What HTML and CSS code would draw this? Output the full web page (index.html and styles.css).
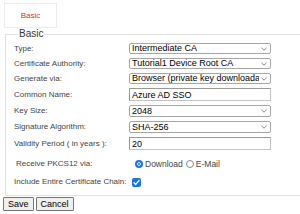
FILE: index.html
```html
<!DOCTYPE html>
<html>
<head>
<meta charset="utf-8">
<link rel="stylesheet" href="styles.css">
</head>
<body>
<div class="page">
  <div class="tab"><span>Basic</span></div>
  <fieldset class="box">
    <legend>Basic</legend>
    <div class="form">
      <label class="lbl">Type:</label>
      <select class="ctl h11"><option>Intermediate CA</option></select>

      <label class="lbl">Certificate Authority:</label>
      <select class="ctl h11"><option>Tutorial1 Device Root CA</option></select>

      <label class="lbl">Generate via:</label>
      <select class="ctl h11"><option>Browser (private key downloadable)</option></select>

      <label class="lbl">Common Name:</label>
      <input class="ctl txt h13" type="text" value="Azure AD SSO">

      <label class="lbl">Key Size:</label>
      <select class="ctl h12"><option>2048</option></select>

      <label class="lbl">Signature Algorithm:</label>
      <select class="ctl h12"><option>SHA-256</option></select>

      <label class="lbl">Validity Period ( in years ):</label>
      <input class="ctl txt h13" type="text" value="20">

      <label class="lbl indent radio-lbl">Receive PKCS12 via:</label>
      <div class="radios">
        <span class="radio on"></span><span class="rtext">Download</span>
        <span class="radio"></span><span class="rtext">E-Mail</span>
      </div>

      <label class="lbl check-lbl">Include Entire Certificate Chain:</label>
      <div class="checkwrap">
        <span class="check">
          <svg width="9" height="9" viewBox="0 0 9 9"><path d="M2 4.7 L3.7 6.4 L7 2.6" fill="none" stroke="#fff" stroke-width="1.4" stroke-linecap="round" stroke-linejoin="round"/></svg>
        </span>
      </div>
    </div>
  </fieldset>
  <div class="buttons">
    <button class="btn">Save</button>
    <button class="btn">Cancel</button>
  </div>
</div>
</body>
</html>
```
FILE: styles.css
```css
html, body {
  margin: 0;
  padding: 0;
  overflow: hidden;
  background: #fff;
}
body {
  font-family: "Liberation Sans", Arial, sans-serif;
  width: 300px;
  height: 214px;
}
.page {
  padding: 3px 0 0 3px;
}
.tab {
  margin-left: 1px;
  width: 51px;
  height: 23px;
  border: 1px solid #ececec;
  display: flex;
  align-items: center;
  justify-content: center;
}
.tab span {
  color: #d0333b;
  font-size: 8px;
}
.box {
  box-sizing: border-box;
  margin: 0 0 0 2px;
  padding: 0 0 7px 8px;
  width: 295px;
  border: 1px solid #e2e2e2;
  border-width: 1px 0 1px 1px;
}
.box legend {
  font-size: 10px;
  color: #333;
  padding: 0 1px;
  margin-left: 4px;
  line-height: 12px;
}
.form {
  display: grid;
  grid-template-columns: 115px 142px;
  row-gap: 4px;
  align-items: center;
  padding-top: 3px;
}
.lbl {
  font-size: 8px;
  color: #444;
  line-height: 10px;
}
.indent {
  padding-left: 2px;
}
.ctl {
  box-sizing: border-box;
  margin: 0;
  width: 142px;
  font-family: "Liberation Sans", Arial, sans-serif;
  font-size: 9px;
  color: #000;
  border: 1px solid #a6a6a6;
  border-radius: 2px;
  background-color: #fff;
  padding: 0 2px;
  line-height: 9px;
  outline: none;
}
select.ctl {
  appearance: none;
  -webkit-appearance: none;
  background-image: url("data:image/svg+xml;utf8,<svg xmlns='http://www.w3.org/2000/svg' width='6' height='4' viewBox='0 0 6 4'><path d='M0.5 0.8 L3 3.2 L5.5 0.8' fill='none' stroke='%23777' stroke-width='0.9'/></svg>");
  background-repeat: no-repeat;
  background-position: right 3px center;
  padding-right: 11px;
  white-space: nowrap;
  overflow: hidden;
}
.txt {
  border-color: #999 #c4c4c4 #c4c4c4 #999;
  border-radius: 0;
  padding: 0 2px;
}
.h11 { height: 11px; }
.h12 { height: 12px; }
.h13 { height: 13px; }
.radio-lbl {
  margin-top: 3px;
}
.radios {
  display: flex;
  align-items: center;
  margin-top: 3px;
  padding-left: 6px;
  height: 14px;
  font-size: 8.5px;
  color: #444;
}
.radio {
  box-sizing: border-box;
  width: 8px;
  height: 8px;
  border-radius: 50%;
  border: 1px solid #8a8a8a;
  background: #fff;
  margin-right: 2px;
}
.radio.on {
  border: 2px solid #1a73e8;
  box-shadow: inset 0 0 0 1px #fff;
  background: #1a73e8;
}
.rtext {
  margin-right: 3px;
}
.check-lbl {
  margin-top: 1px;
}
.checkwrap {
  display: flex;
  align-items: center;
  height: 12px;
  margin-top: 1px;
  padding-left: 3px;
}
.check {
  display: flex;
  width: 9px;
  height: 9px;
  border-radius: 2px;
  background: #1a73e8;
}
.buttons {
  display: flex;
  gap: 2px;
  margin-top: 1px;
}
.btn {
  margin: 0;
  height: 14px;
  padding: 0 4px;
  font-family: "Liberation Sans", Arial, sans-serif;
  font-size: 9px;
  line-height: 12px;
  color: #000;
  background: #efefef;
  border: 1px solid #767676;
  border-radius: 1px;
}
```
